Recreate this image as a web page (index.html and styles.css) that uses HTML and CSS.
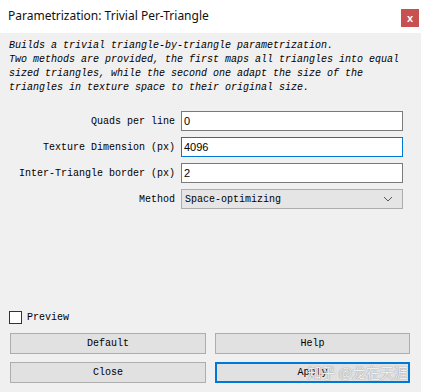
FILE: index.html
```html
<!DOCTYPE html>
<html lang="en">
<head>
  <meta charset="UTF-8">
  <title>Parametrization: Trivial Per-Triangle</title>
  <link rel="stylesheet" href="styles.css">
</head>
<body>
  <div class="window">
    <div class="titlebar">
      <span class="title">Parametrization: Trivial Per-Triangle</span>
      <span class="close-x">x</span>
    </div>

    <div class="content">
      <p class="description">Builds a trivial triangle-by-triangle parametrization.<br>Two methods are provided, the first maps all triangles into equal<br>sized triangles, while the second one adapt the size of the<br>triangles in texture space to their original size.</p>

      <div class="params">
        <label for="quads">Quads per line</label>
        <input type="text" id="quads" value="0">

        <label for="texdim">Texture Dimension (px)</label>
        <input type="text" id="texdim" class="focused" value="4096">

        <label for="border">Inter-Triangle border (px)</label>
        <input type="text" id="border" value="2">

        <label for="method">Method</label>
        <div class="select" id="method">
          <span>Space-optimizing</span>
          <svg width="10" height="6" viewBox="0 0 10 6"><path d="M1 1 L5 5 L9 1" fill="none" stroke="#555" stroke-width="1"/></svg>
        </div>
      </div>

      <div class="bottom">
        <div class="preview">
          <span class="checkbox"></span>
          <span>Preview</span>
        </div>
        <div class="buttons">
          <button>Default</button>
          <button>Help</button>
          <button>Close</button>
          <button class="primary">Apply<span class="watermark">知乎 @龙在天涯</span></button>
        </div>
      </div>
    </div>
  </div>
</body>
</html>
```

FILE: styles.css
```css
* {
  box-sizing: border-box;
}

body {
  margin: 0;
  width: 421px;
  height: 392px;
  overflow: hidden;
  font-family: "Liberation Mono", monospace;
  font-size: 10px;
  color: #000;
}

.window {
  display: flex;
  flex-direction: column;
  height: 392px;
  background: #f0f0f0;
}

.titlebar {
  height: 33px;
  background: #fff;
  display: flex;
  align-items: flex-start;
  padding-left: 8px;
}

.title {
  font-family: "Noto Sans", sans-serif;
  font-size: 12px;
  margin-top: 7px;
  color: #111;
}

.close-x {
  margin-left: auto;
  margin-top: 9px;
  margin-right: 2px;
  width: 18px;
  height: 18px;
  background: #c75050;
  color: #fff;
  font-family: "Liberation Sans", sans-serif;
  font-size: 11px;
  font-weight: bold;
  display: flex;
  align-items: center;
  justify-content: center;
}

.content {
  flex: 1;
  display: flex;
  flex-direction: column;
  padding: 6px 10px 9px 10px;
}

.description {
  margin: 0 0 0 -1px;
  font-style: italic;
  line-height: 14px;
  white-space: nowrap;
}

.params {
  display: grid;
  grid-template-columns: 165px 222px;
  column-gap: 6px;
  row-gap: 6px;
  margin-top: 16px;
  align-items: center;
}

.params label {
  text-align: right;
  white-space: nowrap;
}

.params input {
  height: 20px;
  border: 1px solid #7a7a7a;
  background: #fff;
  padding: 0 2px;
  font-family: "Liberation Sans", sans-serif;
  font-size: 11px;
  outline: none;
}

.params input.focused {
  border-color: #0078d7;
}

.select {
  height: 20px;
  border: 1px solid #adadad;
  background: #e5e5e5;
  display: flex;
  align-items: center;
  justify-content: space-between;
  padding: 0 9px 0 3px;
}

.bottom {
  margin-top: auto;
}

.preview {
  display: flex;
  align-items: center;
  gap: 5px;
  margin-left: -1px;
}

.checkbox {
  width: 13px;
  height: 13px;
  border: 1px solid #333;
  background: #fff;
}

.buttons {
  display: grid;
  grid-template-columns: 196px 195px;
  column-gap: 9px;
  row-gap: 8px;
  margin-top: 9px;
}

button {
  height: 21px;
  border: 1px solid #adadad;
  background: #e1e1e1;
  font-family: "Liberation Mono", monospace;
  font-size: 10px;
  color: #000;
  padding: 0;
  position: relative;
}

button.primary {
  border: 2px solid #0078d7;
}

.watermark {
  position: absolute;
  right: 0;
  top: 0;
  font-family: "Noto Sans CJK SC", sans-serif;
  font-size: 14px;
  line-height: 17px;
  color: rgba(255, 255, 255, 0.85);
  text-shadow: 0 0 1px #999, 0 0 1px #999;
}
```
